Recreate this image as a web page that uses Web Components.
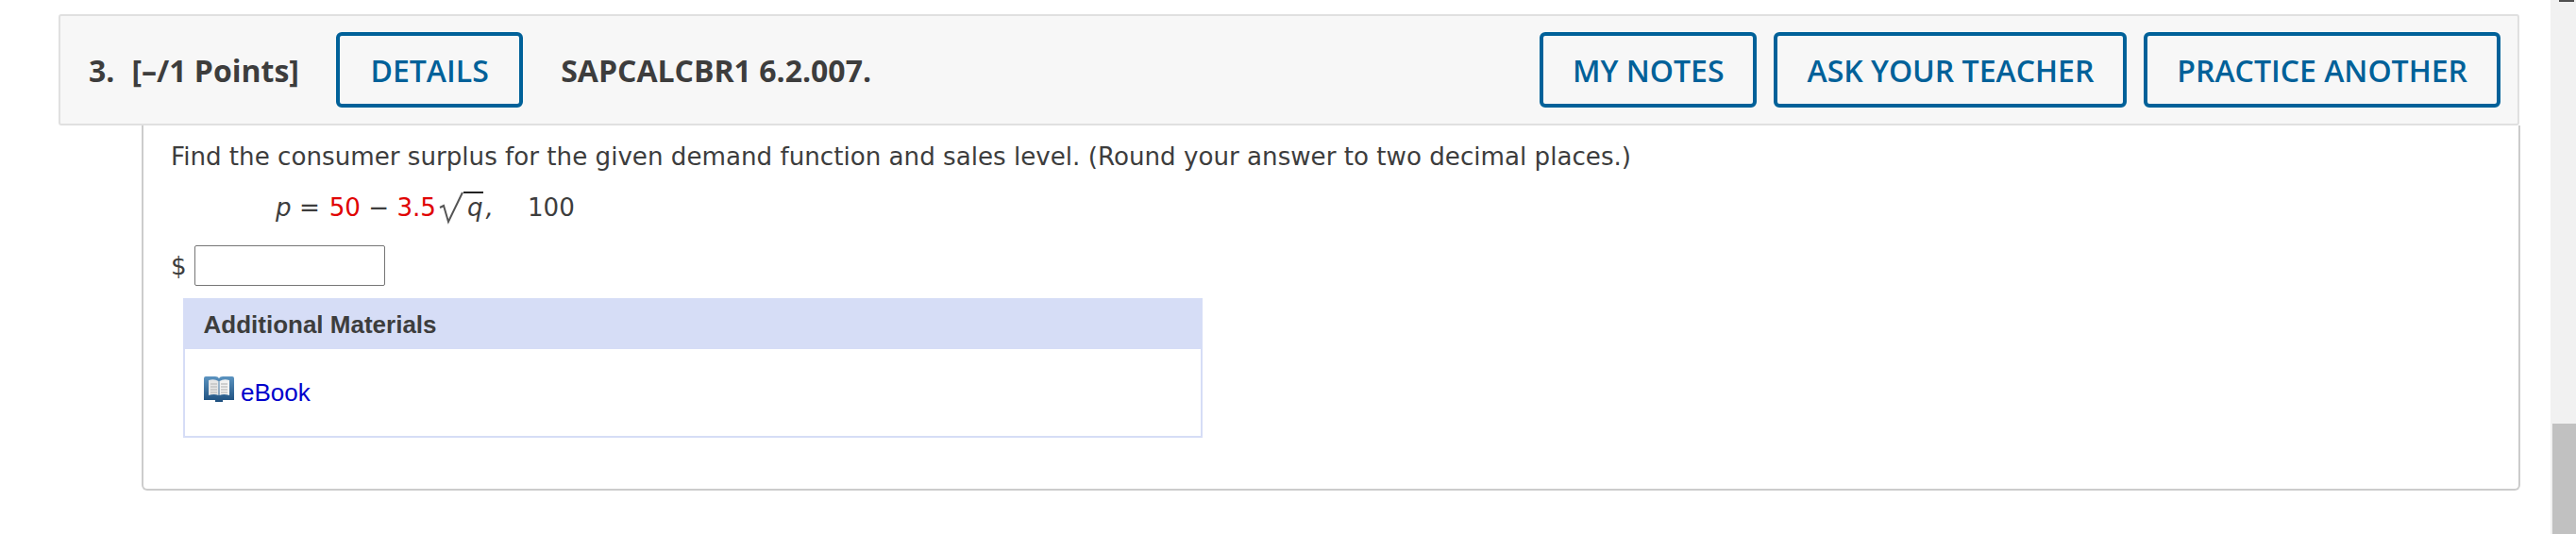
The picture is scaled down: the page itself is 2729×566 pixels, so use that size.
<!DOCTYPE html>
<html>
<head>
<meta charset="utf-8">
<title>Question 3</title>
<style>
    html, body { margin: 0; height: 100%; overflow: hidden; background: #fff; }
    body { display: flex; height: 566px; }
</style>
</head>
<body>
<wa-page>
    <wa-question-header number="3." points="[–/1 Points]" code="SAPCALCBR1 6.2.007.">
        <wa-button slot="left" style="--pad: 32.5px">DETAILS</wa-button>
        <wa-button>MY NOTES</wa-button>
        <wa-button>ASK YOUR TEACHER</wa-button>
        <wa-button>PRACTICE ANOTHER</wa-button>
    </wa-question-header>
    <wa-question-body>
        <p>Find the consumer surplus for the given demand function and sales level. (Round your answer to two decimal places.)</p>
        <wa-equation></wa-equation>
        <wa-answer></wa-answer>
        <wa-materials></wa-materials>
    </wa-question-body>
</wa-page>
<wa-scrollbar></wa-scrollbar>

<script>
class waPage extends HTMLElement {
    constructor() {
        super();
        this.attachShadow({mode: 'open'});
        this.shadowRoot.innerHTML = `
            <style>
                :host { display: block; flex: 0 0 2702px; box-sizing: border-box; padding: 15px 33px 0 62px; }
            </style>
            <slot></slot>
        `;
    }
}

class waButton extends HTMLElement {
    constructor() {
        super();
        this.attachShadow({mode: 'open'});
        this.shadowRoot.innerHTML = `
            <style>
                :host { display: inline-flex; }
                button {
                    box-sizing: border-box;
                    height: 80px;
                    padding: 0 var(--pad, 31px);
                    border: 4px solid #006199;
                    border-radius: 6px;
                    background: #f7f7f7;
                    color: #006199;
                    font: 600 32px "Open Sans", sans-serif;
                }
            </style>
            <button><slot></slot></button>
        `;
    }
}

class waQuestionHeader extends HTMLElement {
    constructor() {
        super();
        this.attachShadow({mode: 'open'});
    }

    connectedCallback() {
        this.shadowRoot.innerHTML = `
            <style>
                :host {
                    display: flex;
                    align-items: center;
                    box-sizing: border-box;
                    height: 118px;
                    padding: 0 18px 0 30px;
                    border: 2px solid #e0e0e0;
                    border-radius: 3px;
                    background: #f7f7f7;
                    color: #3d3d3d;
                    font: 700 32px "Open Sans", sans-serif;
                }
                .num { margin-right: 18px; }
                .code { margin-left: 40px; flex: 1; }
                .pts { margin-right: 39px; }
                .right { display: flex; gap: 18px; }
            </style>
            <span class="num">${this.getAttribute('number')}</span>
            <span class="pts">${this.getAttribute('points')}</span>
            <slot name="left"></slot>
            <span class="code">${this.getAttribute('code')}</span>
            <div class="right"><slot></slot></div>
        `;
    }
}

class waQuestionBody extends HTMLElement {
    constructor() {
        super();
        this.attachShadow({mode: 'open'});
        this.shadowRoot.innerHTML = `
            <style>
                :host {
                    display: block;
                    box-sizing: border-box;
                    height: 387px;
                    margin: 0 -1px 0 88px;
                    padding: 15px 0 0 29px;
                    border: 2px solid #ccc;
                    border-top: 0;
                    border-radius: 0 0 6px 6px;
                    color: #3d3d3d;
                    font: 26.15px "DejaVu Sans", sans-serif;
                }
                ::slotted(p) { margin: 0; line-height: 36px; }
            </style>
            <slot></slot>
        `;
    }
}

class waEquation extends HTMLElement {
    constructor() {
        super();
        this.attachShadow({mode: 'open'});
        this.shadowRoot.innerHTML = `
            <style>
                :host { display: flex; align-items: baseline; height: 36px; padding: 18px 0 0 111px; line-height: 36px; white-space: pre; }
                i { font-style: italic; }
                .red { color: #e00000; }
                .eq { margin-right: 1.5px; }
                svg { display: block; align-self: flex-start; margin-left: 3px; }
                .rad { border-top: 2px solid #222; line-height: 30px; padding-left: 4px; }
                .comma { margin-left: 3px; }
                .val { margin-left: 36px; }
            </style><i>p</i><span class="eq"> = </span><span class="red">50</span><span> − </span><span class="red">3.5</span><svg width="26" height="36" viewBox="0 0 26 36"><path d="M1 18 L5 16 L10 33 L25 2" fill="none" stroke="#555" stroke-width="2"/></svg><i class="rad">q</i><i class="comma">,</i><span class="val">100</span>`;
    }
}

class waAnswer extends HTMLElement {
    constructor() {
        super();
        this.attachShadow({mode: 'open'});
        this.shadowRoot.innerHTML = `
            <style>
                :host { display: flex; align-items: center; gap: 8px; margin-top: 22px; }
                input {
                    box-sizing: border-box;
                    width: 202px;
                    height: 43px;
                    margin: 0;
                    border: 1px solid #767676;
                    border-radius: 2px;
                    background: #fff;
                }
            </style>
            <span>$</span>
            <input type="text" aria-label="Answer">
        `;
    }
}

class waMaterials extends HTMLElement {
    constructor() {
        super();
        this.attachShadow({mode: 'open'});
        this.shadowRoot.innerHTML = `
            <style>
                :host {
                    display: block;
                    box-sizing: border-box;
                    width: 1080px;
                    height: 148px;
                    margin: 13px 0 0 13px;
                    border: 2px solid #d6ddf6;
                    border-top: 0;
                    font: 26px "Liberation Sans", sans-serif;
                }
                .head {
                    height: 54px;
                    margin: 0 -2px;
                    padding-left: 21.5px;
                    background: #d6ddf6;
                    color: #3d3d3d;
                    font-weight: 700;
                    line-height: 56px;
                }
                .body { display: flex; align-items: flex-start; gap: 7px; padding: 29px 0 0 20px; }
                a { margin-top: 2px; color: #0000cc; text-decoration: none; line-height: 30px; }
                svg { display: block; flex: none; }
            </style>
            <div class="head">Additional Materials</div>
            <div class="body">
                <svg width="32" height="27" viewBox="0 0 32 27">
                    <defs>
                        <linearGradient id="cover" x1="0" y1="0" x2="0" y2="1">
                            <stop offset="0" stop-color="#5b93c0"/>
                            <stop offset="1" stop-color="#1d4f7e"/>
                        </linearGradient>
                    </defs>
                    <path d="M0 2 Q0 0 2 0 H12 Q15 0 16 2 Q17 0 20 0 H30 Q32 0 32 2 V25 H20 V27 H12 V25 H0 Z" fill="url(#cover)"/>
                    <path d="M5 4 Q11 2 15.5 5 V20 Q11 18 5 20 Z" fill="#e6e6e6"/>
                    <path d="M27 4 Q21 2 16.5 5 V20 Q21 18 27 20 Z" fill="#f2f2f2"/>
                    <path d="M7 8 H14 M7 11 H14 M7 14 H14 M7 17 H14 M18 8 H25 M18 11 H25 M18 14 H25 M18 17 H25" stroke="#c4c4c4" stroke-width="1.3"/>
                </svg>
                <a href="#">eBook</a>
            </div>
        `;
    }
}

class waScrollbar extends HTMLElement {
    constructor() {
        super();
        this.attachShadow({mode: 'open'});
        this.shadowRoot.innerHTML = `
            <style>
                :host { display: flex; flex-direction: column; flex: 0 0 27px; background: #f1f1f1; }
                .arrow { width: 16px; height: 2px; margin-left: 9px; background: #505050; }
                .space { height: 447px; }
                .thumb { flex: 1; margin-left: 2px; background: #c1c1c1; }
            </style>
            <div class="arrow"></div>
            <div class="space"></div>
            <div class="thumb"></div>
        `;
    }
}

customElements.define('wa-page', waPage);
customElements.define('wa-button', waButton);
customElements.define('wa-question-header', waQuestionHeader);
customElements.define('wa-question-body', waQuestionBody);
customElements.define('wa-equation', waEquation);
customElements.define('wa-answer', waAnswer);
customElements.define('wa-materials', waMaterials);
customElements.define('wa-scrollbar', waScrollbar);
</script>
</body>
</html>
